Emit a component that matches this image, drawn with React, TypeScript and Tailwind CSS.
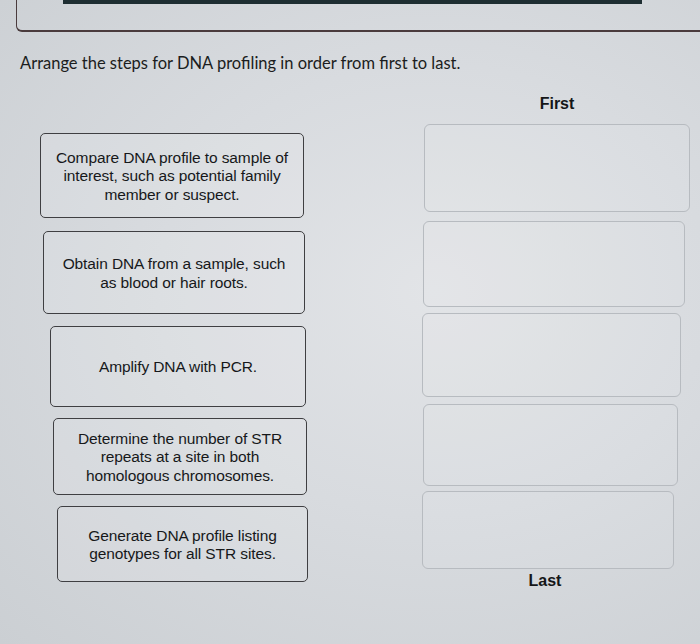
import React from "react";

type Step = { lines: string[]; box: string };

const steps: Step[] = [
  {
    lines: ["Compare DNA profile to sample of", "interest, such as potential family", "member or suspect."],
    box: "ml-[40px] mt-[60px] w-[264px] h-[85px]",
  },
  {
    lines: ["Obtain DNA from a sample, such", "as blood or hair roots."],
    box: "ml-[43px] mt-[13px] w-[262px] h-[83px]",
  },
  {
    lines: ["Amplify DNA with PCR."],
    box: "ml-[50px] mt-[12px] w-[256px] h-[81px]",
  },
  {
    lines: ["Determine the number of STR", "repeats at a site in both", "homologous chromosomes."],
    box: "ml-[53px] mt-[11px] w-[254px] h-[77px]",
  },
  {
    lines: ["Generate DNA profile listing", "genotypes for all STR sites."],
    box: "ml-[57px] mt-[11px] w-[251px] h-[76px]",
  },
];

const slots: string[] = [
  "ml-[2px] mt-[10px] w-[266px] h-[88px]",
  "ml-[1px] mt-[9px] w-[262px] h-[86px]",
  "ml-0 mt-[6px] w-[259px] h-[84px]",
  "ml-[1px] mt-[7px] w-[255px] h-[82px]",
  "ml-0 mt-[5px] w-[252px] h-[78px]",
];

function StepCard({ step }: { step: Step }) {
  return (
    <div
      className={`${step.box} flex flex-col items-center justify-center rounded-[5px] border border-[#3f3f42] bg-white/10 px-2 pt-[2px] text-center text-[15.5px] leading-[18.5px] tracking-[-0.1px] text-[#16181a]`}
    >
      {step.lines.map((l) => (
        <span key={l} className="whitespace-nowrap">
          {l}
        </span>
      ))}
    </div>
  );
}

export default function App() {
  return (
    <div
      className="relative flex h-[644px] w-[700px] flex-col overflow-hidden bg-[radial-gradient(ellipse_at_62%_45%,#e2e4e7_0%,#d8dbdf_45%,#cbcfd3_100%)]"
      style={{ fontFamily: '"Liberation Sans", Arial, sans-serif' }}
    >
      {/* previous question panel, cut off at the top */}
      <div className="ml-[16px] h-[32px] w-[700px] shrink-0 rounded-bl-[6px] border-b-2 border-l border-[#4a3b3d]">
        <div className="ml-[46px] h-[4px] w-[579px] bg-[#1e2e32]" />
      </div>

      <p
        className="ml-[20px] mt-[21px] text-[16.5px] leading-[20px] text-[#1b1d20]"
        style={{ fontFamily: 'Lato, "Liberation Sans", sans-serif' }}
      >
        Arrange the steps for DNA profiling in order from first to last.
      </p>

      <div className="flex flex-row">
        <div className="flex w-[330px] flex-col">
          {steps.map((s) => (
            <StepCard key={s.lines[0]} step={s} />
          ))}
        </div>

        <div className="ml-[92px] mt-[21px] flex flex-col">
          <div className="ml-[2px] w-[266px] text-center text-[16px] font-bold leading-[20px] text-[#141618]">
            First
          </div>
          {slots.map((c, i) => (
            <div key={i} className={`${c} rounded-[6px] border border-[#b7bbc0] bg-white/5`} />
          ))}
          <div className="mt-[2px] w-[246px] text-center text-[16px] font-bold leading-[20px] text-[#141618]">
            Last
          </div>
        </div>
      </div>
    </div>
  );
}
